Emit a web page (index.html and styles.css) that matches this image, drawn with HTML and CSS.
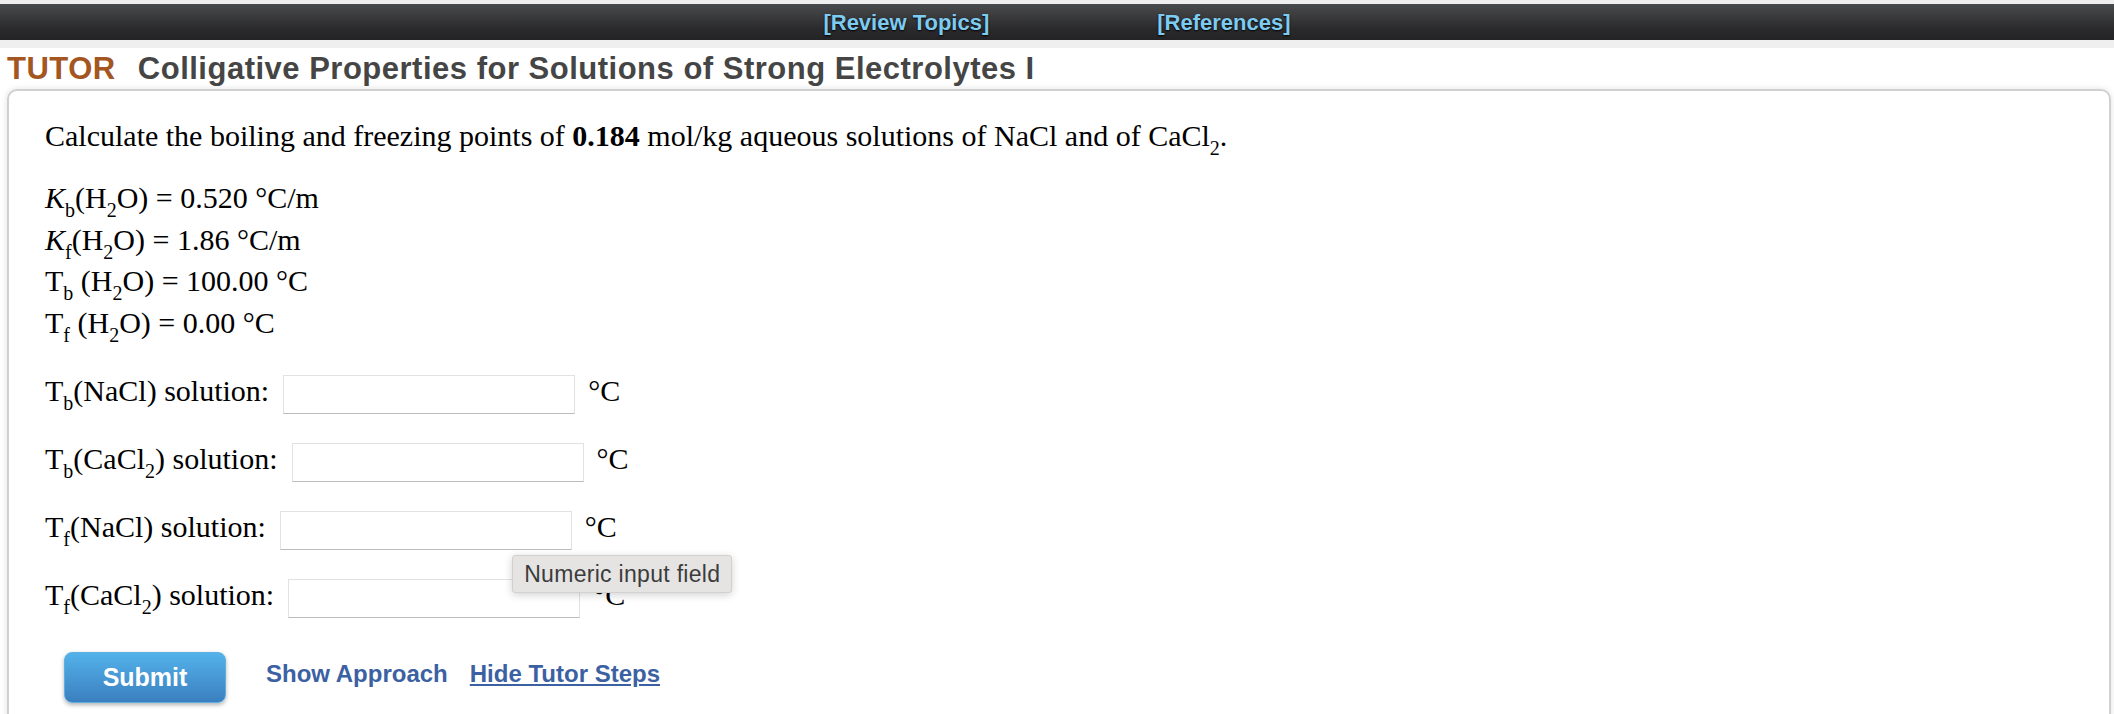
FILE: index.html
```html
<!DOCTYPE html>
<html lang="en">
<head>
  <meta charset="UTF-8">
  <title>TUTOR Colligative Properties for Solutions of Strong Electrolytes I</title>
  <link rel="stylesheet" href="styles.css">
</head>
<body>

  <div class="navbar">
    <a href="#">[Review Topics]</a>
    <a href="#">[References]</a>
  </div>

  <h1 class="title"><span class="tutor">TUTOR</span> Colligative Properties for Solutions of Strong Electrolytes I</h1>

  <div class="panel">
    <p class="question">Calculate the boiling and freezing points of <b>0.184</b> mol/kg aqueous solutions of NaCl and of CaCl<sub>2</sub>.</p>

    <div class="constants">
      <div><i>K</i><sub>b</sub>(H<sub>2</sub>O) = 0.520 °C/m</div>
      <div><i>K</i><sub>f</sub>(H<sub>2</sub>O) = 1.86 °C/m</div>
      <div>T<sub>b</sub> (H<sub>2</sub>O) = 100.00 °C</div>
      <div>T<sub>f</sub> (H<sub>2</sub>O) = 0.00 °C</div>
    </div>

    <div class="answers">
      <div class="row">
        <span class="label">T<sub>b</sub>(NaCl) solution:</span>
        <span class="field"><input type="text"></span>
        <span class="unit">°C</span>
      </div>
      <div class="row">
        <span class="label">T<sub>b</sub>(CaCl<sub>2</sub>) solution:</span>
        <span class="field"><input type="text"></span>
        <span class="unit">°C</span>
      </div>
      <div class="row">
        <span class="label">T<sub>f</sub>(NaCl) solution:</span>
        <span class="field"><input type="text"></span>
        <span class="unit">°C</span>
      </div>
      <div class="row">
        <span class="label">T<sub>f</sub>(CaCl<sub>2</sub>) solution:</span>
        <span class="field">
          <input type="text">
          <span class="tooltip">Numeric input field</span>
        </span>
        <span class="unit">°C</span>
      </div>
    </div>

    <div class="actions">
      <button class="submit">Submit</button>
      <div class="links">
        <a href="#" class="approach">Show Approach</a>
        <a href="#" class="steps">Hide Tutor Steps</a>
      </div>
    </div>
  </div>

</body>
</html>
```

FILE: styles.css
```css
body {
  margin: 0;
  background: #fff;
  font-family: "Liberation Serif", "Times New Roman", serif;
  color: #000;
  overflow: hidden;
}

.navbar {
  height: 35px;
  padding-top: 1px;
  border-top: 4px solid #efefef;
  border-bottom: 8px solid #efefef;
  background: linear-gradient(#4a4b4d, #2a2a2c 70%, #242426);
  display: flex;
  justify-content: center;
  align-items: center;
  gap: 168px;
}

.navbar a {
  font: bold 22px/36px "Liberation Sans", Arial, sans-serif;
  color: #7ecbf2;
  text-decoration: none;
  text-shadow: 0 1px 2px #000;
}

.title {
  margin: 4px 0 0;
  padding-left: 7px;
  font: bold 31px/34px "Liberation Sans", Arial, sans-serif;
  letter-spacing: 0.5px;
  color: #454545;
}

.tutor {
  color: #a3561f;
  margin-right: 13px;
}

.panel {
  margin: 3px 3px 0 7px;
  min-height: 700px;
  padding: 28px 0 0 36px;
  border: 2px solid #d0d0d0;
  border-radius: 10px;
  box-shadow: 0 0 6px rgba(0,0,0,0.12);
}

sub {
  font-size: 20px;
  line-height: 0;
  vertical-align: -9px;
}

.question {
  margin: 0;
  font-size: 30px;
  line-height: 34px;
}

.constants {
  margin-top: 24px;
  font-size: 30px;
  line-height: 41.7px;
}

.answers {
  margin-top: 28px;
  font-size: 30px;
}

.row {
  height: 39px;
  display: flex;
  align-items: center;
  margin-bottom: 29px;
  line-height: 34px;
}

.field {
  position: relative;
  margin: 0 13px 0 14px;
  height: 39px;
}

.field input {
  width: 292px;
  height: 39px;
  box-sizing: border-box;
  margin: 0;
  border: 1px solid #e2e2e2;
  border-bottom-color: #bcbcbc;
  background: #fff;
  outline: none;
}

.tooltip {
  position: absolute;
  left: 224px;
  top: -21px;
  z-index: 5;
  white-space: nowrap;
  padding: 0 11px;
  font: 23px/36px "Liberation Sans", Arial, sans-serif;
  letter-spacing: 0.3px;
  color: #3c3c3c;
  background: #e5e4e3;
  border: 1px solid #d2d1d0;
  border-radius: 3px;
  box-shadow: 0 2px 8px rgba(0,0,0,0.18);
}

.actions {
  display: flex;
  align-items: center;
  margin-top: 37px;
  padding-left: 19px;
}

.submit {
  width: 162px;
  height: 51px;
  font: bold 25px "Liberation Sans", Arial, sans-serif;
  color: #fff;
  background: linear-gradient(#53b2ea, #3b7fbf);
  border: 1px solid #5eaee2;
  border-radius: 8px;
  box-shadow: 0 2px 4px rgba(0,0,0,0.3);
  cursor: pointer;
}

.links {
  margin-left: 40px;
  margin-bottom: 7px;
  display: flex;
  gap: 22px;
}

.links a {
  font: bold 24px/28px "Liberation Sans", Arial, sans-serif;
  color: #3b61a3;
  text-decoration: none;
}

.links .steps {
  text-decoration: underline;
}
```
